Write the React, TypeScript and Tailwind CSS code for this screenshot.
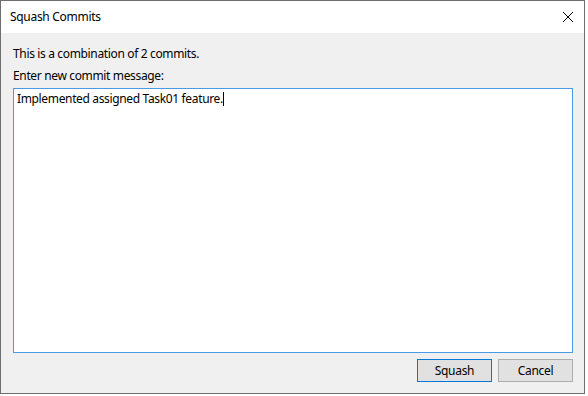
import React from "react";

export default function App() {
  return (
    <div className="w-[588px] h-[396px] bg-white" style={{ fontFamily: '"Noto Sans", sans-serif' }}>
      <div className="w-[585px] h-[394px] border border-[#6f6f6f] flex flex-col bg-[#f0f0f0]">
        <div className="h-[32px] bg-white flex items-center justify-between pl-[9px] pr-[9px] shrink-0">
          <span className="text-[12px] text-black leading-none tracking-[-0.3px]">Squash Commits</span>
          <svg width="12" height="12" viewBox="0 0 12 12" className="mr-[1px]">
            <path d="M1 1 L11 11 M11 1 L1 11" stroke="#000" strokeWidth="1" />
          </svg>
        </div>
        <div className="flex-1 flex flex-col px-[12px] pt-[13px]">
          <div className="text-[12px] leading-[16px] text-black h-[16px] tracking-[-0.35px]">This is a combination of 2 commits.</div>
          <div className="text-[12px] leading-[16px] text-black mt-[6px] h-[16px] tracking-[-0.35px]">Enter new commit message:</div>
          <div className="mt-[4px] w-[560px] h-[265px] bg-white border border-[#4a9ae6] px-[3px] pt-[2px] text-[12px] leading-[16px]">
            <span className="text-black tracking-[-0.35px]">Implemented assigned Task01 feature.</span>
            <span className="inline-block w-[1px] h-[14px] bg-black align-[-3px]"></span>
          </div>
          <div className="flex justify-end gap-[6px] mt-[6px] w-[560px]">
            <button className="w-[75px] h-[23px] bg-[#e1e1e1] border border-[#0078d7] text-[12px] text-black leading-none tracking-[-0.3px]">Squash</button>
            <button className="w-[75px] h-[23px] bg-[#e1e1e1] border border-[#adadad] text-[12px] text-black leading-none tracking-[-0.3px]">Cancel</button>
          </div>
        </div>
      </div>
    </div>
  );
}
